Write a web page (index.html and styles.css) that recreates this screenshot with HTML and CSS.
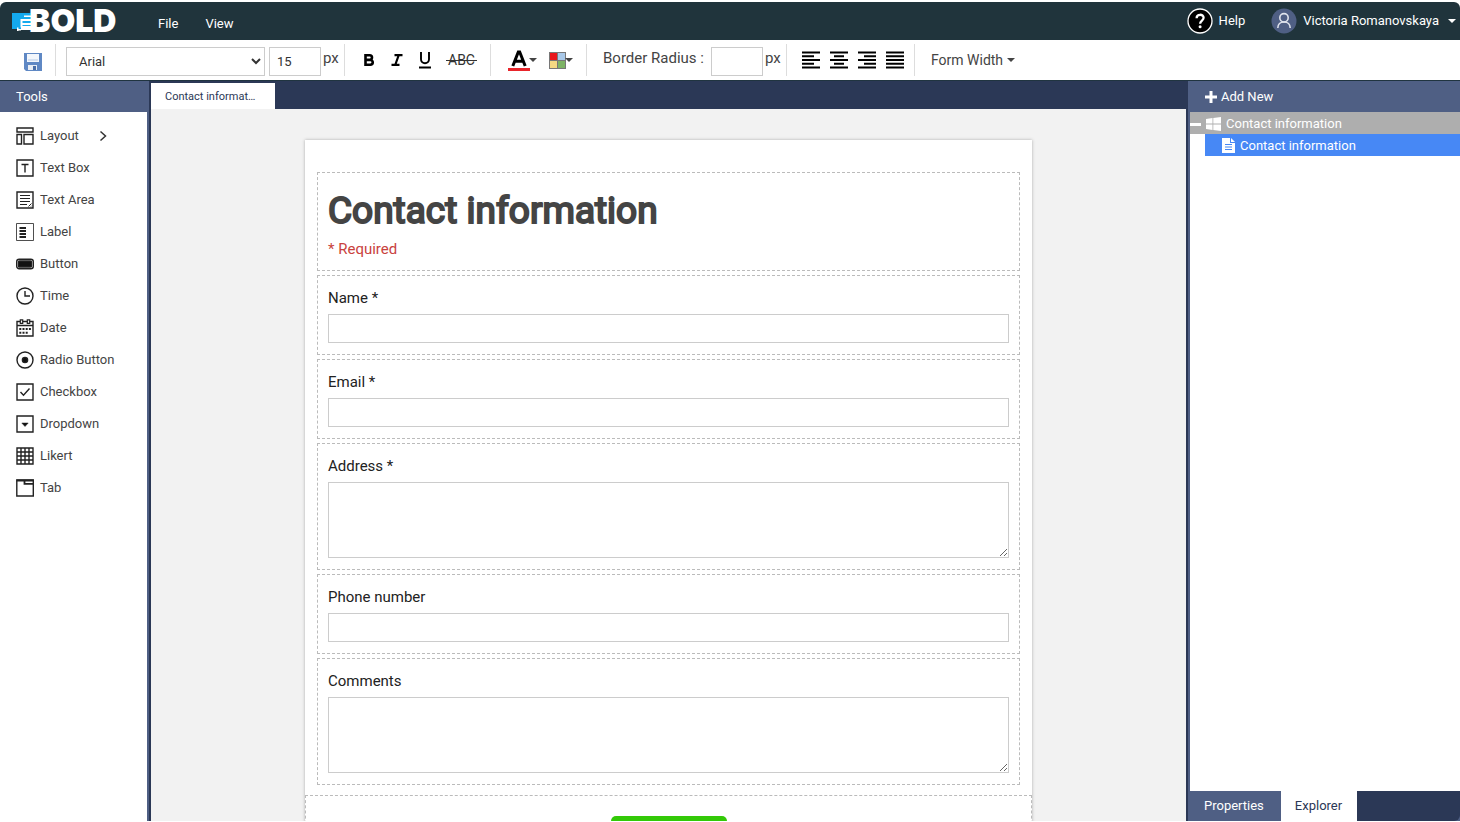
FILE: index.html
```html
<!DOCTYPE html>
<html lang="en">
<head>
<meta charset="utf-8">
<title>Contact information - Form Designer</title>
<link rel="stylesheet" href="styles.css">
</head>
<body>
<div class="app">
  <header class="topbar">
    <a class="logo" href="#" aria-label="BOLD">
      <svg class="logo-mark" viewBox="0 0 20 20" aria-hidden="true">
        <path fill="#14a9ee" d="M0 2h20v17H7v-1H0z"/>
        <path fill="#fff" d="M20 4.500h-8V6h8zM8.500 8H20v2h-9.500v2H20v2h-9.500v1H20V19H9v-2.500h-.5zM5 16.500h1.500V20H5zM5 18h4v1.500H5z"/>
      </svg>
      <span class="logo-text">BOLD</span>
    </a>
    <nav class="menu">
      <button class="menu-item" type="button">File</button>
      <button class="menu-item" type="button">View</button>
    </nav>
    <div class="account">
      <button class="account-item" type="button">
        <svg class="round-icon" viewBox="0 0 26 26" aria-hidden="true">
          <circle cx="13" cy="13" r="12" fill="#000" stroke="#fff" stroke-width="1.3"/>
          <path d="M9.600 10.200c0-4.600 7-4.400 7-.4 0 2.800-3.500 2.800-3.500 6" fill="none" stroke="#fff" stroke-width="2.300"/>
          <circle cx="13.100" cy="18.800" r="1.500" fill="#fff"/>
        </svg>
        Help
      </button>
      <button class="account-item" type="button">
        <svg class="round-icon" viewBox="0 0 26 26" aria-hidden="true">
          <circle cx="13" cy="13" r="12.500" fill="#4f5f84"/>
          <circle cx="13" cy="9.800" r="4.200" fill="none" stroke="#dfe3ec" stroke-width="1.600"/>
          <path d="M6.800 20c0-3.600 2.600-6 6.200-6s6.200 2.400 6.200 6" fill="none" stroke="#dfe3ec" stroke-width="1.600"/>
        </svg>
        Victoria Romanovskaya
        <span class="caret"></span>
      </button>
    </div>
  </header>

  <div class="toolbar">
    <div class="group group-save">
      <button class="tool-btn" type="button" aria-label="Save">
        <svg width="18" height="18" viewBox="0 0 18 18"><path fill="#5f88c4" d="M0 0h18v18H2l-2-2z"/><path fill="#f3f7fc" d="M3 1h12v8H3z"/><path fill="#d5e1f1" d="M4 6h10v2H4z"/><path fill="#e8edf4" d="M4 12h9v5H4z"/><path fill="#4a6fa8" d="M9 13h3v4H9z"/></svg>
      </button>
    </div>
    <div class="group group-font">
      <select class="box font-select" aria-label="Font family"><option>Arial</option><option>Roboto</option></select>
      <input class="box small-box" type="text" value="15" aria-label="Font size"><span class="unit">px</span>
    </div>
    <div class="group group-style">
      <button class="tool-btn" type="button" aria-label="Bold"><svg width="14" height="14" viewBox="0 0 14 14"><path fill="none" stroke="#000" stroke-width="2.600" d="M3.500 2.300h4.200a2.300 2.300 0 0 1 0 4.600H3.500M3.500 6.900h4.800a2.400 2.400 0 0 1 0 4.900H3.500zM3.500 1v12"/></svg></button>
      <button class="tool-btn" type="button" aria-label="Italic"><svg width="14" height="14" viewBox="0 0 14 14"><path fill="none" stroke="#000" stroke-width="2.200" d="M4.500 2.200h8M1.500 11.800h8M8.800 2 5.200 12"/></svg></button>
      <button class="tool-btn" type="button" aria-label="Underline"><svg width="14" height="18" viewBox="0 0 14 18"><path fill="none" stroke="#000" stroke-width="1.900" d="M3 1v7.200a4 4 0 0 0 8 0V1M1 16.500h12"/></svg></button>
      <button class="tool-btn strike" type="button">ABC</button>
    </div>
    <div class="group group-color">
      <button class="tool-btn" type="button" aria-label="Font color"><svg width="22" height="22" viewBox="0 0 22 22"><path fill="none" stroke="#000" stroke-width="3" d="M4.800 17 10.300 3h1.400L17.200 17M6.800 12.300h8.400"/><path fill="#e8252b" d="M0 19h22v3H0z"/></svg><span class="caret"></span></button>
      <button class="tool-btn" type="button" aria-label="Background color"><svg width="17" height="17" viewBox="0 0 17 17"><path fill="#777" d="M0 0h17v17H0z"/><path fill="#e8151b" d="M1 1h7v7H1z"/><path fill="#a9c8e8" d="M9 1h7v7H9z"/><path fill="#f5d983" d="M1 9h7v7H1z"/><path fill="#7db364" d="M9 9h7v7H9z"/></svg><span class="caret"></span></button>
    </div>
    <div class="group group-radius">
      <label class="radius-label" for="radius">Border Radius :</label>
      <input class="box small-box" id="radius" type="text"><span class="unit">px</span>
    </div>
    <div class="group group-align">
      <button class="tool-btn" type="button" aria-label="Align left"><svg width="18" height="18" viewBox="0 0 18 18"><path stroke="#000" stroke-width="2" d="M0 1.500h18M0 5.300h12M0 9h18M0 12.800h12M0 16.500h18"/></svg></button>
      <button class="tool-btn" type="button" aria-label="Align center"><svg width="18" height="18" viewBox="0 0 18 18"><path stroke="#000" stroke-width="2" d="M0 1.500h18M4 5.300h10M0 9h18M4 12.800h10M0 16.500h18"/></svg></button>
      <button class="tool-btn" type="button" aria-label="Align right"><svg width="18" height="18" viewBox="0 0 18 18"><path stroke="#000" stroke-width="2" d="M0 1.500h18M6 5.300h12M0 9h18M6 12.800h12M0 16.500h18"/></svg></button>
      <button class="tool-btn" type="button" aria-label="Justify"><svg width="18" height="18" viewBox="0 0 18 18"><path stroke="#000" stroke-width="2" d="M0 1.500h18M0 5.300h18M0 9h18M0 12.800h18M0 16.500h18"/></svg></button>
    </div>
    <div class="group group-width">
      <button class="tool-btn form-width" type="button">Form Width<span class="caret"></span></button>
    </div>
  </div>

  <div class="workspace">
    <aside class="tools">
      <h2 class="panel-head">Tools</h2>
      <ul class="tool-list">
        <li><button class="tool" type="button"><svg class="tool-icon" viewBox="0 0 18 18"><path d="M1 1h16v4H1zM1 7.500h4.500V17H1zM8 7.500h9V17H8z"/></svg>Layout<svg class="chevron" viewBox="0 0 8 12"><path d="m1.500 1.500 5 4.500-5 4.500"/></svg></button></li>
        <li><button class="tool" type="button"><svg class="tool-icon" viewBox="0 0 18 18"><path d="M1 1h16v16H1zM5.500 5.500h7M9 5.500v8"/></svg>Text Box</button></li>
        <li><button class="tool" type="button"><svg class="tool-icon" viewBox="0 0 18 18"><path d="M1 1h16v16H1z"/><path stroke-width="1" d="M4 4.500h10M4 7.500h10M4 10.500h10M4 13.500h7M12.500 15.500l3-3M15 15.500l.8-.8"/></svg>Text Area</button></li>
        <li><button class="tool" type="button"><svg class="tool-icon" viewBox="0 0 18 18"><path stroke-width=".8" d="M.5.500h17v17H.500z"/><path stroke-width="2" d="M3.500 5h6.500M3.500 8h6.500M3.500 11h6.500M3.500 14h6.500"/></svg>Label</button></li>
        <li><button class="tool" type="button"><svg class="tool-icon" viewBox="0 0 18 18"><rect x=".7" y="4.200" width="16.600" height="9.600" rx="2.500"/><rect class="solid" x="2.500" y="6" width="13" height="6" rx="1"/></svg>Button</button></li>
        <li><button class="tool" type="button"><svg class="tool-icon" viewBox="0 0 18 18"><circle cx="9" cy="9" r="8"/><path d="M9 4v5h5"/></svg>Time</button></li>
        <li><button class="tool" type="button"><svg class="tool-icon" viewBox="0 0 18 18"><path d="M1 2.500h16v14.500H1zM1 6.500h16"/><path class="paper" stroke-width="1.200" d="M4.300.8h2.400v3.500H4.300zM11.300.8h2.400v3.500h-2.400z"/><path stroke-width="2" d="M6.500 10h2M9.700 10h2M12.900 10h2M3.300 13.700h2M6.500 13.700h2M3.300 10h2M9.700 13.700h2"/></svg>Date</button></li>
        <li><button class="tool" type="button"><svg class="tool-icon" viewBox="0 0 18 18"><circle cx="9" cy="9" r="8"/><circle class="solid" cx="9" cy="9" r="2.600"/></svg>Radio Button</button></li>
        <li><button class="tool" type="button"><svg class="tool-icon" viewBox="0 0 18 18"><path d="M1 1h16v16H1zM4.500 9l3 3.200 6-6.700"/></svg>Checkbox</button></li>
        <li><button class="tool" type="button"><svg class="tool-icon" viewBox="0 0 18 18"><path d="M1 1h16v16H1z"/><path class="solid" stroke-width=".5" d="M5.800 8h6.400L9 11.500z"/></svg>Dropdown</button></li>
        <li><button class="tool" type="button"><svg class="tool-icon" viewBox="0 0 18 18"><path d="M1 1h16v16H1zM5 1v16M9 1v16M13 1v16M1 5h16M1 9h16M1 13h16"/></svg>Likert</button></li>
        <li><button class="tool" type="button"><svg class="tool-icon" viewBox="0 0 18 18"><path d="M.8 1h16.500v16H.8z"/><path stroke-width="1.800" d="M.5 1.500h17M8.500 1.500v3.300H17"/></svg>Tab</button></li>
      </ul>
    </aside>

    <main class="designer">
      <div class="tabstrip"><button class="doc-tab" type="button">Contact information</button></div>
      <div class="canvas">
        <form class="page">
          <div class="fields">
            <section class="field intro">
              <h1 class="form-title">Contact information</h1>
              <p class="required">* Required</p>
            </section>
            <section class="field"><label for="name">Name *</label><input id="name" type="text"></section>
            <section class="field"><label for="email">Email *</label><input id="email" type="text"></section>
            <section class="field"><label for="address">Address *</label><textarea id="address"></textarea></section>
            <section class="field"><label for="phone">Phone number</label><input id="phone" type="text"></section>
            <section class="field"><label for="comments">Comments</label><textarea id="comments"></textarea></section>
          </div>
          <div class="actions"><button class="submit" type="button" aria-label="Submit"></button></div>
        </form>
      </div>
    </main>

    <aside class="explorer">
      <button class="panel-head add-new" type="button"><svg width="12" height="12" viewBox="0 0 12 12"><path stroke="#fff" stroke-width="3" d="M6 0v12M0 6h12"/></svg>Add New</button>
      <ul class="tree">
        <li><button class="node root" type="button"><svg width="11" height="16" viewBox="0 0 11 16"><path stroke="#fff" stroke-width="3" d="M0 8.500h11"/></svg><svg width="15" height="14" viewBox="0 0 15 14"><path fill="#fff" d="M0 2l6.500-.9v5.500H0zM7.300 1 15 0v6.600H7.300zM0 7.400h6.500v5.500L0 12zM7.300 7.400H15V14l-7.700-1z"/></svg>Contact information</button></li>
        <li><button class="node leaf" type="button"><svg width="13" height="15" viewBox="0 0 13 15"><path fill="#fff" d="M0 0h8v5h5v10H0zM9 0l4 4H9z"/><path stroke="#4788f5" d="M3 6.500h7M3 9h7M3 11.500h7"/></svg>Contact information</button></li>
      </ul>
      <div class="bottom-tabs">
        <button class="bottom-tab" type="button">Properties</button>
        <button class="bottom-tab active" type="button">Explorer</button>
      </div>
    </aside>
  </div>
</div>
</body>
</html>
```
FILE: styles.css
```css
* { box-sizing: border-box; }
html, body { height: 100%; }
body { margin: 0; background: #fff; color: #444; font: 13px/16px Roboto, "Liberation Sans", sans-serif; }
button, input, select, textarea { font: inherit; color: inherit; }
button { margin: 0; padding: 0; border: 0; background: none; cursor: pointer; }
ul, h1, h2, p { margin: 0; padding: 0; list-style: none; font-weight: 400; }
svg { flex: none; }

.app { height: 100vh; padding: 2px 0 1px; display: flex; flex-direction: column; overflow: hidden; }
.caret { width: 0; border: 4px solid transparent; border-top-color: currentColor; border-bottom: 0; }

.topbar { flex: none; height: 38px; display: flex; align-items: center; background: #20343c; border-radius: 6px 6px 0 0; color: #fff; }
.logo { display: flex; align-items: center; width: 158px; padding-left: 12px; color: #fff; text-decoration: none; }
.logo-mark { width: 20px; height: 20px; }
.logo-text { font: 900 32px/36px Inter, Roboto, sans-serif; margin-left: -3px; }
.menu { display: flex; gap: 27px; padding-top: 5px; }
.account { display: flex; gap: 26px; margin-left: auto; padding-right: 4px; }
.account-item { display: flex; align-items: center; gap: 6px; }
.account-item .caret { margin-left: 3px; }
.round-icon { width: 26px; height: 26px; }

.toolbar { flex: none; height: 41px; display: flex; align-items: center; background: #fff; border-bottom: 1px solid #203440; }
.group { height: 32px; display: flex; align-items: center; border-right: 1px solid #ddd; }
.group-save { width: 56px; padding: 4px 0 0 24px; }
.group-font { width: 289px; gap: 4px; padding: 2px 0 0 10px; }
.group-font .unit { margin-left: -2px; }
.group-style { width: 146px; gap: 14px; padding-left: 17px; }
.group-color { width: 96px; gap: 12px; padding-left: 17px; }
.group-radius { width: 200px; gap: 2px; padding: 2px 0 0 16px; }
.group-align { width: 128px; gap: 10px; padding-left: 15px; }
.group-width { padding-left: 16px; border: 0; }
.tool-btn { display: flex; align-items: center; color: #444; }
.tool-btn .caret { margin-left: -1px; }
.strike { padding: 0 2px; color: #333; font-size: 14px; background: linear-gradient(#333, #333) center / 100% 1px no-repeat; }
.box { height: 29px; border: 1px solid #ccc; background: #fff; color: #333; border-radius: 0; }
.font-select { width: 199px; padding-left: 8px; }
.small-box { width: 52px; padding: 0 7px; }
.unit, .radius-label { font-size: 15px; padding-bottom: 6px; }
.radius-label { padding-right: 5px; }
.form-width { font-size: 14px; gap: 5px; }

.workspace { flex: 1; min-height: 0; display: grid; grid-template-columns: 151px 1fr 274px; }
.panel-head { height: 31px; padding: 0 16px; font-size: 13px; line-height: 31px; background: #4f5f84; color: #fff; }
.tools { display: flex; flex-direction: column; padding-right: 2px; background: #4f5f84; border-right: 2px solid #2b3856; }
.tool-list { flex: 1; padding-top: 8px; background: #fff; }
.tool { display: flex; align-items: center; gap: 6px; height: 32px; padding-left: 16px; }
.tool-icon { width: 18px; height: 18px; fill: none; stroke: #222; stroke-width: 1.4; }
.tool-icon .solid { fill: #111; }
.tool-icon .paper { fill: #fff; }
.chevron { width: 8px; height: 12px; margin-left: 14px; fill: none; stroke: #333; stroke-width: 1.5; }

.designer { min-width: 0; display: flex; flex-direction: column; overflow: hidden; background: #f2f2f2; }
.tabstrip { flex: none; height: 28px; padding-top: 2px; background: #2b3856; }
.doc-tab { width: 124px; height: 26px; padding: 1px 18px 0 14px; background: #fff; color: #2b3856; font-size: 11px; text-align: left; white-space: nowrap; overflow: hidden; text-overflow: ellipsis; }
.canvas { flex: 1; min-height: 0; padding-top: 31px; overflow: hidden; }
.page { width: 727px; max-width: 100%; margin: 0 auto; background: #fff; box-shadow: 0 0 3px #aaa; }
.fields { display: flex; flex-direction: column; gap: 4px; padding: 32px 12px 10px; }
.field { padding: 10px 10px 11px; border: 1px dashed #bbb; color: #222; }
.field label { display: block; margin-bottom: 4px; font-size: 15px; line-height: 24px; }
.field input, .field textarea { display: block; width: 100%; border: 1px solid #ccc; background: #fff; }
.field input { height: 29px; }
.field textarea { height: 76px; }
.intro { height: 99px; }
.form-title { color: #444; font-size: 37px; line-height: 56px; -webkit-text-stroke: 2px #444; }
.required { color: #c9423d; font-size: 15px; line-height: 20px; }
.actions { height: 70px; padding-top: 20px; border: 1px dashed #bbb; text-align: center; }
.submit { width: 116px; height: 36px; border-radius: 5px; background: #33c907; }

.explorer { display: flex; flex-direction: column; padding-left: 2px; background: #4f5f84; border-left: 2px solid #2b3856; }
.add-new { display: flex; align-items: center; gap: 4px; padding-left: 15px; }
.tree { flex: 1; background: #fff; }
.node { display: flex; align-items: center; gap: 5px; width: 100%; height: 22px; padding-top: 1px; color: #fff; }
.root { background: #aeaeae; }
.leaf { width: auto; min-width: calc(100% - 15px); margin-left: 15px; padding-left: 17px; background: #4788f5; }
.bottom-tabs { display: flex; height: 30px; background: #2b3856; border-radius: 0 0 6px 0; }
.bottom-tab { padding: 0 17px 0 14px; background: #4f5f84; color: #fff; }
.bottom-tab.active { padding: 0 15px 0 14px; background: #fff; color: #2b3856; }
```
